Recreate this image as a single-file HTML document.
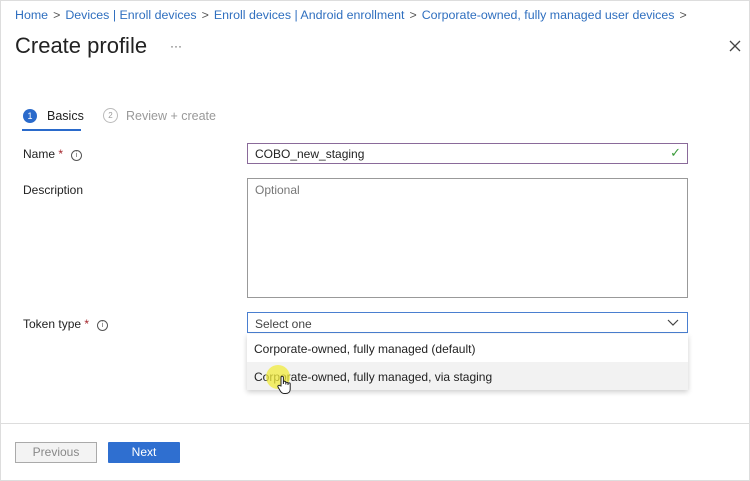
<!DOCTYPE html>
<html><head><meta charset="utf-8"><style>
body{margin:0;width:750px;height:481px;overflow:hidden;background:#fff;font-family:"Liberation Sans",sans-serif;position:relative}
.frame{position:absolute;left:0;top:0;width:748px;height:479px;border:1px solid #ddd}
.a{position:absolute;white-space:nowrap}
.bc{top:8px;left:15px;font-size:12.4px;color:#2f6fbf}
.bc span{color:#555;margin:0 5px}
.title{top:33px;left:15px;font-size:22px;color:#222}
.lbl{font-size:12px;color:#222}
.box{position:absolute;border:1px solid #999;box-sizing:border-box;background:#fff}
.info{display:inline-block;width:9px;height:9px;border:1px solid #555;border-radius:50%;font-size:7px;line-height:9px;text-align:center;color:#555;margin-left:8px;vertical-align:1px}
</style></head><body>
<div class="frame"></div>
<div class="a bc">Home<span>&gt;</span>Devices | Enroll devices<span>&gt;</span>Enroll devices | Android enrollment<span>&gt;</span>Corporate-owned, fully managed user devices<span>&gt;</span></div>
<div class="a title">Create profile</div>
<div class="a" style="top:39px;left:170px;font-size:12px;color:#555">···</div>
<svg class="a" style="left:729px;top:40px" width="12" height="12"><path d="M1 1L11 11M11 1L1 11" stroke="#444" stroke-width="1.3"/></svg>

<div class="a" style="top:109px;left:23px;width:14px;height:14px;border-radius:50%;background:#2a6acb;color:#fff;font-size:9px;text-align:center;line-height:14px">1</div>
<div class="a lbl" style="top:109px;left:47px;font-size:12.5px">Basics</div>
<div class="a" style="top:129px;left:22px;width:59px;height:2px;background:#2a6acb"></div>
<div class="a" style="top:108px;left:103px;width:13px;height:13px;border-radius:50%;border:1px solid #bbb;color:#999;font-size:8px;text-align:center;line-height:13px">2</div>
<div class="a" style="top:109px;left:126px;font-size:12.5px;color:#999">Review + create</div>

<div class="a lbl" style="top:147px;left:23px">Name <span style="color:#a4262c">*</span><span class="info">i</span></div>
<div class="box" style="left:247px;top:143px;width:441px;height:21px;border-color:#8a6a9a"><span class="a lbl" style="left:7px;top:3px">COBO_new_staging</span><span class="a" style="right:6px;top:1px;color:#3a9a3a;font-size:13px">✓</span></div>

<div class="a lbl" style="top:183px;left:23px">Description</div>
<div class="box" style="left:247px;top:178px;width:441px;height:120px"><span class="a lbl" style="left:7px;top:4px;color:#777">Optional</span></div>

<div class="a lbl" style="top:317px;left:23px">Token type <span style="color:#a4262c">*</span><span class="info">i</span></div>
<div class="box" style="left:247px;top:312px;width:441px;height:21px;border-color:#4a7fd0"><span class="a lbl" style="left:7px;top:4px;color:#444">Select one</span>
<svg class="a" style="right:8px;top:6px" width="12" height="8"><path d="M1 1L6 6L11 1" stroke="#444" fill="none" stroke-width="1.2"/></svg></div>
<div class="a" style="left:247px;top:334px;width:441px;height:56px;background:#fff;box-shadow:0 2px 5px rgba(0,0,0,.2)">
<div class="a lbl" style="left:7px;top:8px">Corporate-owned, fully managed (default)</div>
<div class="a" style="left:0;top:28px;width:441px;height:28px;background:#f2f2f2"></div>
<div class="a lbl" style="left:7px;top:36px">Corporate-owned, fully managed, via staging</div>
</div>
<div class="a" style="left:266px;top:365px;width:24px;height:24px;border-radius:50%;background:rgba(240,235,60,.75)"></div>
<svg class="a" style="left:277px;top:375px" width="14" height="20"><path d="M4 11V2.5a1.2 1.2 0 0 1 2.4 0V9V7.5a1.2 1.2 0 0 1 2.4 0V9.5V8a1.2 1.2 0 0 1 2.2 0V10V9a1.1 1.1 0 0 1 2.2 0V14c0 3-2 4.5-4.5 4.5H7c-2 0-3-1.2-4-3L1 12a1.2 1.2 0 0 1 2-1.3z" fill="#fff" stroke="#222" stroke-width="1"/></svg>

<div class="a" style="left:0;top:423px;width:750px;height:1px;background:#ddd"></div>
<div class="a" style="left:15px;top:442px;width:82px;height:21px;box-sizing:border-box;border:1px solid #aaa;background:#f3f3f3;color:#888;font-size:12px;text-align:center;line-height:19px">Previous</div>
<div class="a" style="left:108px;top:442px;width:72px;height:21px;background:#2f6fd0;color:#fff;font-size:12px;text-align:center;line-height:21px;border-radius:1px">Next</div>
</body></html>
